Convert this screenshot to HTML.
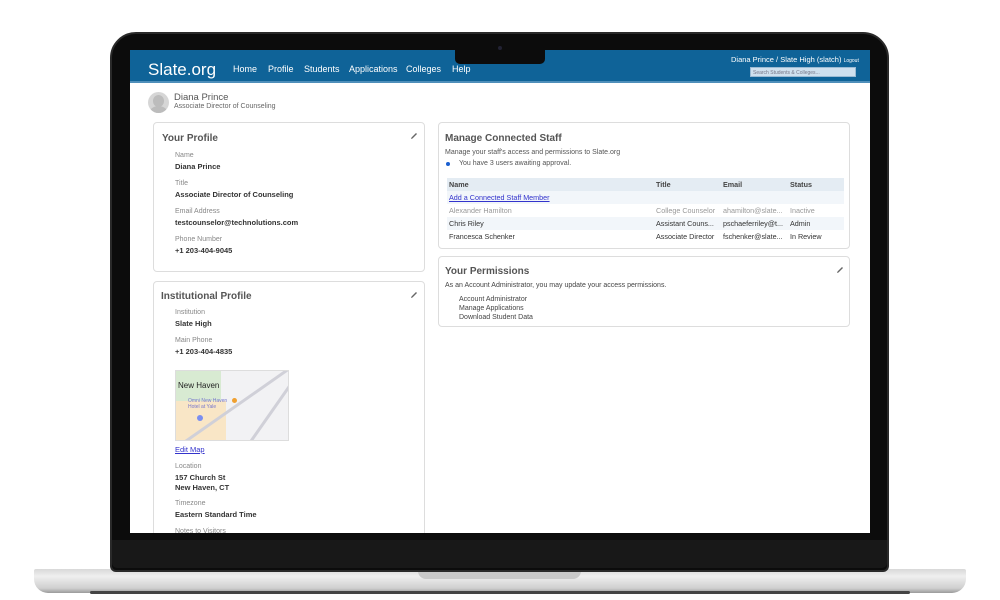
<!DOCTYPE html>
<html><head><meta charset="utf-8"><style>
*{margin:0;padding:0;box-sizing:border-box}
body{width:1000px;height:600px;background:#fff;position:relative;overflow:hidden;font-family:"Liberation Sans",sans-serif;color:#333}
.abs{position:absolute}
.bezel{left:110px;top:32px;width:779px;height:540px;background:#0c0c0c;border-radius:26px 26px 6px 6px;border:2px solid #2a2a2a}
.screen{left:130px;top:50px;width:740px;height:483px;background:#fff;overflow:hidden}
.hdr{left:0;top:0;width:740px;height:33px;background:#0f6398;border-bottom:2px solid #4f8fba}
.notch{left:325px;top:0;width:90px;height:14px;background:#0c0c0c;border-radius:0 0 5px 5px}
.logo{left:18px;top:9px;color:#fff;font-size:17px}
.nav{top:13px;color:#fff;font-size:9px}
.panel{position:absolute;border:1px solid #ddd;border-radius:4px;background:#fff}
.ph{font-size:10px;font-weight:bold;color:#555;position:absolute}
.lbl{font-size:7px;color:#888;position:absolute;left:21px}
.val{font-size:7.5px;font-weight:bold;color:#333;position:absolute;left:21px;line-height:10px}
.pen{position:absolute;width:8px;height:8px}
table{border-collapse:collapse;font-size:7.2px;position:absolute;left:8px;top:55px;width:397px}
td{height:13px;padding:0 2px;white-space:nowrap}
</style></head><body>
<div class="abs" style="left:34px;top:569px;width:932px;height:24px;background:linear-gradient(#d8d8d8,#efefef 30%,#cfcfcf 80%,#9a9a9a);border-radius:2px 2px 14px 14px"></div>
<div class="abs" style="left:90px;top:591px;width:820px;height:3px;background:#444;border-radius:2px"></div>
<div class="abs" style="left:418px;top:569px;width:163px;height:10px;background:#c9c9c9;border-radius:0 0 8px 8px"></div>
<div class="abs bezel"></div>
<div class="abs" style="left:112px;top:540px;width:775px;height:28px;background:#181818;border-radius:0 0 5px 5px"></div>
<div class="abs screen">
 <div class="abs hdr"></div>
 <div class="abs logo" style="top:10px">Slate.org</div>
 <div class="abs nav" style="left:103px;top:14px">Home</div>
 <div class="abs nav" style="left:138px;top:14px">Profile</div>
 <div class="abs nav" style="left:174px;top:14px">Students</div>
 <div class="abs nav" style="left:219px;top:14px">Applications</div>
 <div class="abs nav" style="left:276px;top:14px">Colleges</div>
 <div class="abs nav" style="left:322px;top:14px">Help</div>
 <div class="abs notch"></div>
 <div class="abs" style="left:601px;top:5px;color:#fff;font-size:7.5px">Diana Prince / Slate High (slatch) <span style="font-size:5px">Logout</span></div>
 <div class="abs" style="left:620px;top:17px;width:106px;height:10px;background:#cfe0ee;border:1px solid #9bbbd4;font-size:5px;color:#778;padding:2px 2px">Search Students &amp; Colleges...</div>
 <div class="abs" style="left:18px;top:42px;width:21px;height:21px;border-radius:50%;background:#d6d6d6;overflow:hidden">
  <div class="abs" style="left:5px;top:3px;width:11px;height:12px;border-radius:50%;background:#bcbcbc"></div>
  <div class="abs" style="left:2px;top:14px;width:17px;height:12px;border-radius:50%;background:#bcbcbc"></div>
 </div>
 <div class="abs" style="left:44px;top:42px;font-size:9.5px;color:#555">Diana Prince</div>
 <div class="abs" style="left:44px;top:53px;font-size:7px;color:#666">Associate Director of Counseling</div>

 <div class="panel" style="left:23px;top:72px;width:272px;height:150px">
  <div class="ph" style="left:8px;top:10px">Your Profile</div>
  <svg class="pen" style="left:256px;top:9px" viewBox="0 0 8 8"><path d="M1 7L1.5 5.5 6 1 7 2 2.5 6.5Z" fill="#666"/></svg>
  <div class="lbl" style="top:29px">Name</div><div class="val" style="top:39px">Diana Prince</div>
  <div class="lbl" style="top:57px">Title</div><div class="val" style="top:67px">Associate Director of Counseling</div>
  <div class="lbl" style="top:85px">Email Address</div><div class="val" style="top:95px">testcounselor@technolutions.com</div>
  <div class="lbl" style="top:113px">Phone Number</div><div class="val" style="top:123px">+1 203-404-9045</div>
 </div>
 <div class="panel" style="left:23px;top:231px;width:272px;height:270px">
  <div class="ph" style="left:7px;top:9px">Institutional Profile</div>
  <svg class="pen" style="left:256px;top:9px" viewBox="0 0 8 8"><path d="M1 7L1.5 5.5 6 1 7 2 2.5 6.5Z" fill="#666"/></svg>
  <div class="lbl" style="top:27px">Institution</div><div class="val" style="top:37px">Slate High</div>
  <div class="lbl" style="top:55px">Main Phone</div><div class="val" style="top:65px">+1 203-404-4835</div>
  <div class="abs" style="left:21px;top:88px;width:114px;height:71px;background:#f2f2f4;border:1px solid #ddd;overflow:hidden">
   <div class="abs" style="left:0;top:30px;width:50px;height:40px;background:#f9e6c6"></div>
   <div class="abs" style="left:0;top:0;width:45px;height:30px;background:#d8ead2"></div>
   <div class="abs" style="left:-10px;top:30px;width:150px;height:3px;background:#d0d0d8;transform:rotate(-35deg)"></div>
   <div class="abs" style="left:20px;top:40px;width:150px;height:3px;background:#d0d0d8;transform:rotate(-55deg)"></div>
   <div class="abs" style="left:2px;top:10px;font-size:8px;color:#222">New Haven</div>
   <div class="abs" style="left:12px;top:27px;font-size:5px;color:#77c;line-height:6px">Omni New Haven<br>Hotel at Yale</div>
   <div class="abs" style="left:21px;top:44px;width:6px;height:6px;border-radius:50%;background:#7a8ef0"></div>
   <div class="abs" style="left:56px;top:27px;width:5px;height:5px;background:#f0a030;border-radius:50%"></div>
  </div>
  <div class="abs" style="left:21px;top:163px;font-size:7.5px;color:#33c;text-decoration:underline">Edit Map</div>
  <div class="lbl" style="top:181px">Location</div><div class="val" style="top:191px">157 Church St<br>New Haven, CT</div>
  <div class="lbl" style="top:218px">Timezone</div><div class="val" style="top:228px">Eastern Standard Time</div>
  <div class="lbl" style="top:246px">Notes to Visitors</div>
 </div>

 <div class="panel" style="left:308px;top:72px;width:412px;height:127px">
  <div class="ph" style="left:6px;top:10px">Manage Connected Staff</div>
  <div class="abs" style="left:6px;top:26px;font-size:7px;color:#555">Manage your staff's access and permissions to Slate.org</div>
  <div class="abs" style="left:7px;top:39px;width:4px;height:4px;border-radius:50%;background:#1a5fd0"></div>
  <div class="abs" style="left:20px;top:37px;font-size:7px;color:#555">You have 3 users awaiting approval.</div>
  <table>
   <tr style="background:#e4ecf3;font-weight:bold;color:#444"><td style="width:207px">Name</td><td style="width:67px">Title</td><td style="width:67px">Email</td><td>Status</td></tr>
   <tr style="background:#f2f6fa"><td colspan="4" style="color:#33c;text-decoration:underline">Add a Connected Staff Member</td></tr>
   <tr style="color:#999"><td>Alexander Hamilton</td><td>College Counselor</td><td>ahamilton@slate...</td><td>Inactive</td></tr>
   <tr style="background:#f2f6fa;color:#333"><td>Chris Riley</td><td>Assistant Couns...</td><td>pschaeferriley@t...</td><td>Admin</td></tr>
   <tr style="color:#333"><td>Francesca Schenker</td><td>Associate Director</td><td>fschenker@slate...</td><td>In Review</td></tr>
  </table>
 </div>
 <div class="panel" style="left:308px;top:206px;width:412px;height:71px">
  <div class="ph" style="left:6px;top:9px">Your Permissions</div>
  <svg class="pen" style="left:397px;top:9px" viewBox="0 0 8 8"><path d="M1 7L1.5 5.5 6 1 7 2 2.5 6.5Z" fill="#666"/></svg>
  <div class="abs" style="left:6px;top:25px;font-size:7px;color:#444">As an Account Administrator, you may update your access permissions.</div>
  <div class="abs" style="left:20px;top:38px;font-size:7px;color:#444;line-height:9px">Account Administrator<br>Manage Applications<br>Download Student Data</div>
 </div>
</div>
<div class="abs" style="left:498px;top:46px;width:4px;height:4px;border-radius:50%;background:#223"></div>
</body></html>
